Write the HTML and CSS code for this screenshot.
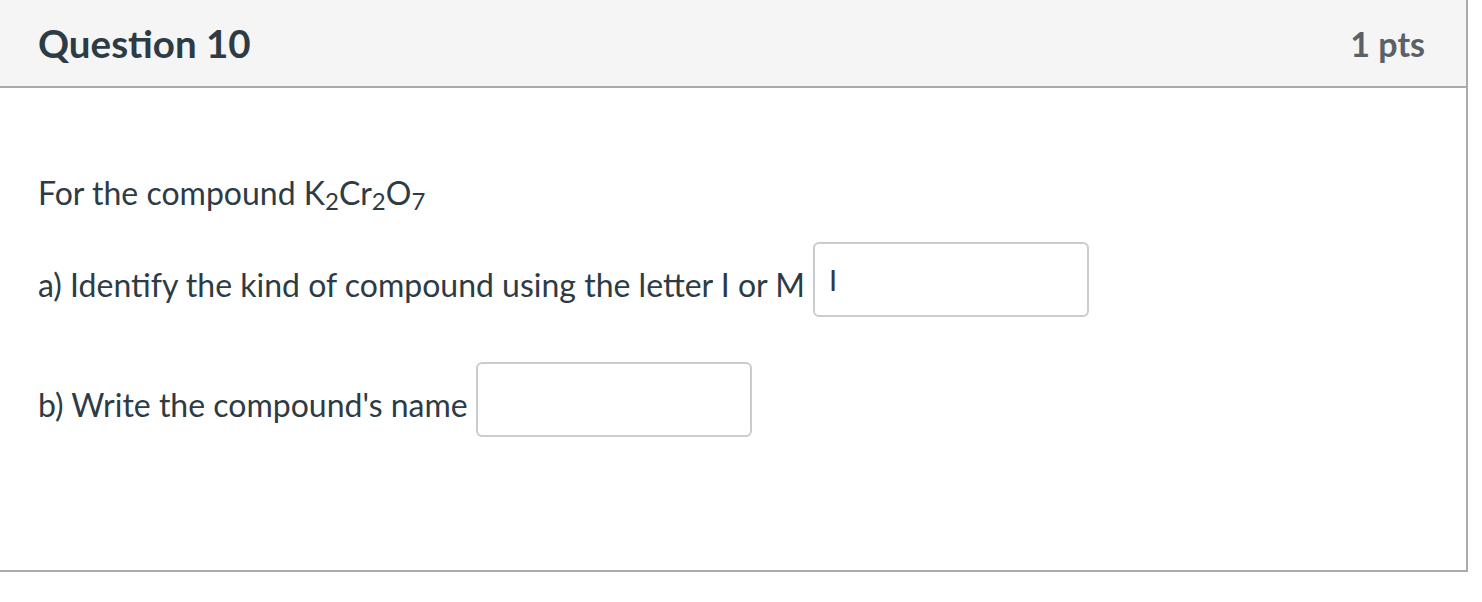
FILE: index.html
```html
<!DOCTYPE html>
<html lang="en">
<head>
<meta charset="utf-8">
<title>Question 10</title>
<link rel="stylesheet" href="styles.css">
</head>
<body>
<div class="question">
  <div class="question-header">
    <h2 class="question-name">Question 10</h2>
    <span class="question-points">1 pts</span>
  </div>
  <div class="question-body">
    <p class="intro">For the compound K<sub>2</sub>Cr<sub>2</sub>O<sub>7</sub></p>
    <div class="row row-a">
      <span class="label">a) Identify the kind of compound using the letter I or M</span>
      <input class="answer" type="text" value="I">
    </div>
    <div class="row row-b">
      <span class="label">b) Write the compound's name</span>
      <input class="answer" type="text" value="">
    </div>
  </div>
</div>
</body>
</html>
```
FILE: styles.css
```css
html, body {
  margin: 0;
  padding: 0;
  background: #ffffff;
}
body {
  font-family: Lato, "Open Sans", sans-serif;
  color: #2d3b45;
}
.question {
  margin: -2px 14px 0 -2px;
  border: 2px solid #aaaaaa;
  background: #ffffff;
}
.question-header {
  height: 88px;
  background: #f5f5f5;
  border-bottom: 2px solid #aaaaaa;
  display: flex;
  align-items: center;
  justify-content: space-between;
  padding: 0 41px 0 38px;
  box-sizing: border-box;
}
.question-name {
  margin: 0;
  font-size: 38.5px;
  font-weight: 700;
  color: #2d3b45;
}
.question-points {
  font-size: 34px;
  font-weight: 700;
  color: #5b6166;
}
.question-body {
  height: 482px;
  box-sizing: border-box;
  padding: 0 38px;
  font-size: 32px;
}
.intro {
  margin: 0;
  padding-top: 86px;
  line-height: 38px;
}
.intro sub {
  font-size: 0.75em;
  line-height: 0;
  vertical-align: -0.2em;
}
.row {
  display: flex;
  align-items: flex-start;
}
.row-a { margin-top: 30px; }
.row-b { margin-top: 45px; }
.label {
  line-height: 38px;
  margin-top: 24px;
}
.answer {
  width: 276px;
  height: 75px;
  box-sizing: border-box;
  margin-left: 8px;
  border: 2px solid #c7cdd1;
  border-radius: 6px;
  padding: 0 14px;
  font-family: Lato, sans-serif;
  font-size: 29px;
  color: #2d3b45;
  background: #ffffff;
  outline: none;
}
```
